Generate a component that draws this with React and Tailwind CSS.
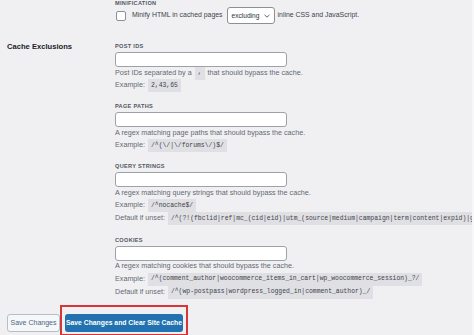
const sans = { fontFamily: '"Liberation Sans", Arial, sans-serif' };

function Code({ children }) {
  return (
    <code className="bg-[#e0e0e4] px-[3px] py-[1.5px] text-[6.4px] leading-[10px] text-[#3c434a] whitespace-nowrap font-['Liberation_Mono',monospace]">
      {children}
    </code>
  );
}

function Field({ label, desc, example, fallback, last }) {
  return (
    <div className={last ? "" : "mb-[10px]"}>
      <div className="h-[8px] text-[5.6px] leading-[8px] font-semibold tracking-[0.3px] text-[#50575e] uppercase">
        {label}
      </div>
      <div className="mt-[2px] h-[15px] w-[172px] rounded-[3px] border border-[#9ea1a6] bg-white" />
      <div className="h-[12px] flex items-center text-[7.2px] text-[#646970] whitespace-nowrap">{desc}</div>
      <div className="h-[13px] flex items-center gap-[3px] text-[7.2px] text-[#646970] whitespace-nowrap">
        <span>Example:</span>
        <Code>{example}</Code>
      </div>
      {fallback && (
        <div className="h-[13.5px] flex items-center gap-[3px] text-[7.2px] text-[#646970] whitespace-nowrap">
          <span>Default if unset:</span>
          <Code>{fallback}</Code>
        </div>
      )}
    </div>
  );
}

export default function App() {
  return (
    <div
      style={sans}
      className="w-[474px] h-[335px] overflow-hidden bg-[#f0f0f3] border-r-[2px] border-[#f7f7f9] flex flex-col"
    >
      <div className="flex">
        <div className="w-[115px] shrink-0 pl-[7px] pt-[42px]">
          <div className="h-[10px] leading-[10px] text-[7.6px] font-bold text-[#1d2327]">Cache Exclusions</div>
        </div>
        <div className="flex-1 min-w-0">
          <div className="h-[6px] text-[5.6px] leading-[6px] font-semibold tracking-[0.3px] text-[#50575e] uppercase">
            Minification
          </div>
          <div className="mt-[1px] flex items-center text-[6.9px] text-[#3c434a] whitespace-nowrap">
            <span className="ml-[1px] w-[10px] h-[10px] rounded-[2px] border border-[#8c8f94] bg-white" />
            <span className="ml-[6px]">Minify HTML in cached pages</span>
            <span className="ml-[4px] h-[17px] w-[48px] rounded-[3px] border border-[#8c8f94] bg-white flex items-center justify-between pl-[4px] pr-[4px] text-[6.6px] text-[#2c3338]">
              excluding
              <svg width="6" height="4" viewBox="0 0 6 4" fill="none">
                <path d="M0.5 0.8 L3 3.2 L5.5 0.8" stroke="#50575e" strokeWidth="0.9" />
              </svg>
            </span>
            <span className="ml-[3px]">inline CSS and JavaScript.</span>
          </div>
          <div className="mt-[18px]">
            <Field
              label="Post IDs"
              desc={
                <span className="flex items-center gap-[3px]">
                  Post IDs separated by a <Code>,</Code> that should bypass the cache.
                </span>
              }
              example="2,43,65"
            />
            <Field
              label="Page Paths"
              desc="A regex matching page paths that should bypass the cache."
              example="/^(\/|\/forums\/)$/"
            />
            <Field
              label="Query Strings"
              desc="A regex matching query strings that should bypass the cache."
              example="/^nocache$/"
              fallback="/^(?!(fbclid|ref|mc_(cid|eid)|utm_(source|medium|campaign|term|content|expid)|gclid|fb_(action_ids|action_types|source)|age-verified|usqp|cn-reloaded|_ga|_ke)).+$/"
            />
            <Field
              label="Cookies"
              desc="A regex matching cookies that should bypass the cache."
              example="/^(comment_author|woocommerce_items_in_cart|wp_woocommerce_session)_?/"
              fallback="/^(wp-postpass|wordpress_logged_in|comment_author)_/"
              last
            />
          </div>
        </div>
      </div>
      <div className="mt-[6px] flex items-end pl-[7px]">
        <button className="mb-[4px] h-[18px] w-[53px] rounded-[3px] border border-[#b3bfcc] bg-[#f6f7f7] text-[7px] text-[#4a6688]">
          Save Changes
        </button>
        <div className="flex border-[2px] border-[#d63638] px-[3px] pt-[7px] pb-[2px]">
          <button className="h-[18px] w-[118px] rounded-[3px] bg-[#2271b1] text-[6.8px] font-bold text-white">
            Save Changes and Clear Site Cache
          </button>
        </div>
      </div>
    </div>
  );
}
